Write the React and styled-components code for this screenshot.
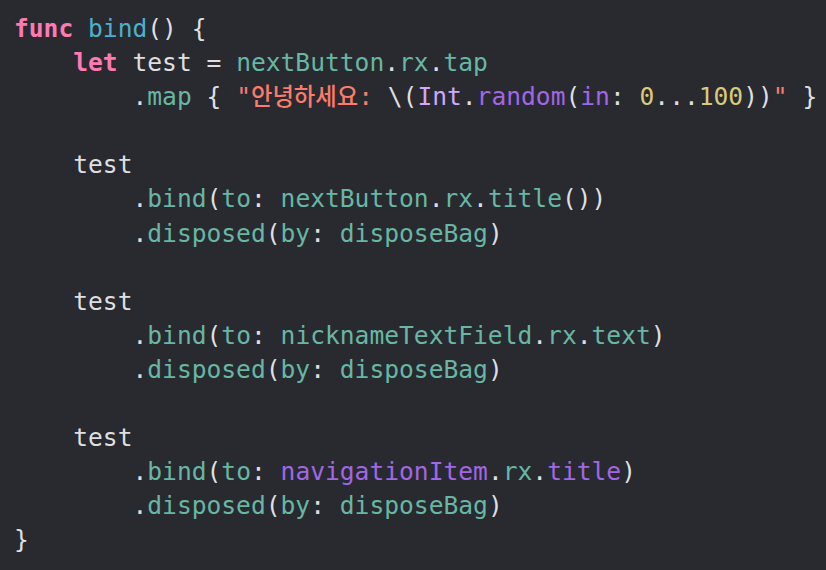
import React from "react";
import styled, { createGlobalStyle } from "styled-components";

const GlobalStyle = createGlobalStyle`
  html, body {
    margin: 0;
    padding: 0;
    background: #292a30;
  }
`;

const colors = {
  plain: "#dfdfe0",
  keyword: "#ff7ab2",
  decl: "#4eb0cc",
  project: "#67b7a4",
  string: "#fc7b6a",
  number: "#d9c97c",
  type: "#d0a8ff",
  other: "#a167e6",
};

const Editor = styled.div`
  width: 826px;
  height: 570px;
  box-sizing: border-box;
  padding: 12px 0 0 14px;
  background: #292a30;
  font-family: "DejaVu Sans Mono", "Liberation Mono", monospace;
  font-size: 24.6px;
  line-height: 34.1px;
  color: ${colors.plain};
  white-space: pre;
  overflow: hidden;
`;

const Line = styled.div`
  height: 34.1px;
`;

const Token = styled.span`
  color: ${({ $kind }) => colors[$kind] || colors.plain};
  font-weight: ${({ $kind }) => ($kind === "keyword" ? 700 : 400)};
`;

const Hangul = styled.span`
  font-family: "Noto Sans CJK KR", sans-serif;
  font-size: 23.3px;
  font-weight: 500;
  line-height: 1;
`;

const P = ({ children }) => <Token $kind="plain">{children}</Token>;
const K = ({ children }) => <Token $kind="keyword">{children}</Token>;
const T = ({ children }) => <Token $kind="project">{children}</Token>;
const O = ({ children }) => <Token $kind="other">{children}</Token>;

const BindBlock = ({ target }) => (
  <>
    <Line>
      {"    "}
      <P>test</P>
    </Line>
    <Line>
      {"        "}
      <P>.</P>
      <T>bind</T>
      <P>(</P>
      <T>to</T>
      <P>: </P>
      {target}
      <P>)</P>
    </Line>
    <Line>
      {"        "}
      <P>.</P>
      <T>disposed</T>
      <P>(</P>
      <T>by</T>
      <P>: </P>
      <T>disposeBag</T>
      <P>)</P>
    </Line>
  </>
);

const App = () => {
  return (
    <>
      <GlobalStyle />
      <Editor>
        <Line>
          <K>func</K> <Token $kind="decl">bind</Token>
          <P>() {"{"}</P>
        </Line>
        <Line>
          {"    "}
          <K>let</K>
          <P> test = </P>
          <T>nextButton</T>
          <P>.</P>
          <T>rx</T>
          <P>.</P>
          <T>tap</T>
        </Line>
        <Line>
          {"        "}
          <P>.</P>
          <T>map</T>
          <P> {"{"} </P>
          <Token $kind="string">
            "<Hangul>안녕하세요</Hangul>:{" "}
          </Token>
          <P>\(</P>
          <Token $kind="type">Int</Token>
          <P>.</P>
          <O>random</O>
          <P>(</P>
          <O>in</O>
          <P>: </P>
          <Token $kind="number">0</Token>
          <P>...</P>
          <Token $kind="number">100</Token>
          <P>))</P>
          <Token $kind="string">"</Token>
          <P> {"}"}</P>
        </Line>
        <Line />
        <BindBlock
          target={
            <>
              <T>nextButton</T>
              <P>.</P>
              <T>rx</T>
              <P>.</P>
              <T>title</T>
              <P>()</P>
            </>
          }
        />
        <Line />
        <BindBlock
          target={
            <>
              <T>nicknameTextField</T>
              <P>.</P>
              <T>rx</T>
              <P>.</P>
              <T>text</T>
            </>
          }
        />
        <Line />
        <BindBlock
          target={
            <>
              <O>navigationItem</O>
              <P>.</P>
              <T>rx</T>
              <P>.</P>
              <O>title</O>
            </>
          }
        />
        <Line>
          <P>{"}"}</P>
        </Line>
      </Editor>
    </>
  );
};

export default App;
